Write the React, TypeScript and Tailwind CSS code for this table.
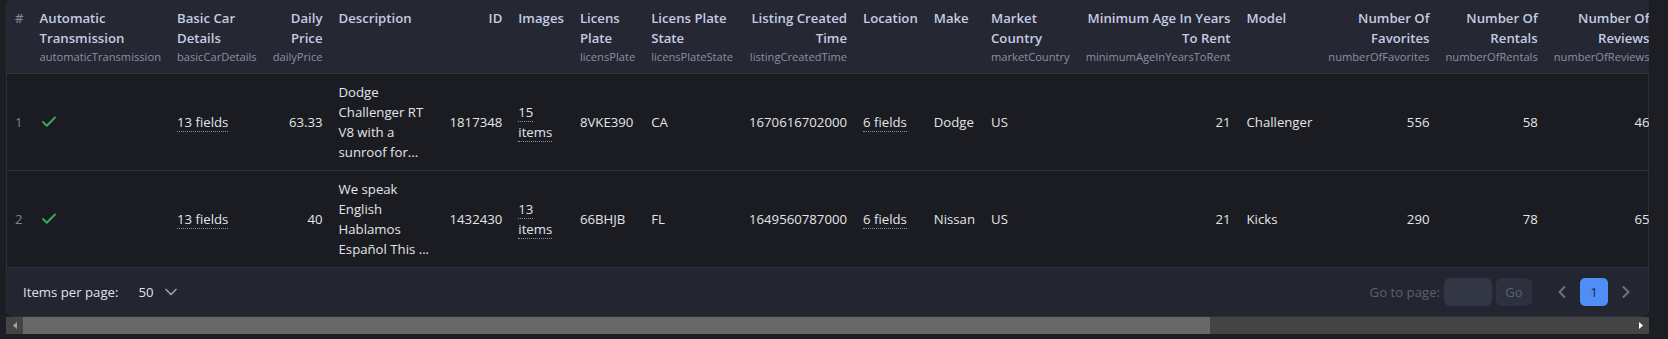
import type { ReactNode } from 'react'
import { Check, ChevronDown, ChevronLeft, ChevronRight } from 'lucide-react'

type Column = { title: string[]; sub?: string; right?: boolean }

const columns: Column[] = [
  { title: ['Automatic', 'Transmission'], sub: 'automaticTransmission' },
  { title: ['Basic Car', 'Details'], sub: 'basicCarDetails' },
  { title: ['Daily', 'Price'], sub: 'dailyPrice', right: true },
  { title: ['Description'] },
  { title: ['ID'], right: true },
  { title: ['Images'] },
  { title: ['Licens', 'Plate'], sub: 'licensPlate' },
  { title: ['Licens Plate', 'State'], sub: 'licensPlateState' },
  { title: ['Listing Created', 'Time'], sub: 'listingCreatedTime', right: true },
  { title: ['Location'] },
  { title: ['Make'] },
  { title: ['Market', 'Country'], sub: 'marketCountry' },
  { title: ['Minimum Age In Years', 'To Rent'], sub: 'minimumAgeInYearsToRent', right: true },
  { title: ['Model'] },
  { title: ['Number Of', 'Favorites'], sub: 'numberOfFavorites', right: true },
  { title: ['Number Of', 'Rentals'], sub: 'numberOfRentals', right: true },
  { title: ['Number Of', 'Reviews'], sub: 'numberOfReviews', right: true },
  { title: ['Owner'] },
  { title: ['Rating'], right: true },
  { title: ['Seats'], right: true },
  { title: ['Trim'] },
  { title: ['Year'], right: true },
]

function Dotted({ children }: { children: ReactNode }) {
  return <span className="border-b border-dotted border-[#8a8fa0]">{children}</span>
}

function Desc({ text }: { text: string }) {
  return <div className="w-[95px]">{text}</div>
}

const ok = <Check size={18} strokeWidth={2.5} className="text-[#3daa5c]" />

const rows: ReactNode[][] = [
  [
    ok,
    <Dotted>13 fields</Dotted>,
    '63.33',
    <Desc text="Dodge Challenger RT V8 with a sunroof for..." />,
    '1817348',
    <Dotted>15 items</Dotted>,
    '8VKE390',
    'CA',
    '1670616702000',
    <Dotted>6 fields</Dotted>,
    'Dodge',
    'US',
    '21',
    'Challenger',
    '556',
    '58',
    '46',
    <Dotted>4 fields</Dotted>,
    '4.9',
    '5',
    'R/T',
    '2019',
  ],
  [
    ok,
    <Dotted>13 fields</Dotted>,
    '40',
    <Desc text="We speak English Hablamos Español This ..." />,
    '1432430',
    <Dotted>13 items</Dotted>,
    '66BHJB',
    'FL',
    '1649560787000',
    <Dotted>6 fields</Dotted>,
    'Nissan',
    'US',
    '21',
    'Kicks',
    '290',
    '78',
    '65',
    <Dotted>4 fields</Dotted>,
    '5',
    '5',
    'SV',
    '2021',
  ],
]

export default function App() {
  return (
    <div className="min-h-screen bg-[#1d1e23] pl-[6px] font-['Open_Sans',sans-serif] text-[13.2px] leading-5">
      <div className="w-[1643px] overflow-hidden">
        <div className="-mt-[2px] rounded-lg border border-[#2c2e3a] bg-[#1b1c21]">
          <table className="w-full border-separate border-spacing-0">
            <thead>
              <tr>
                <th className="rounded-tl-[7px] border-b border-[#30323f] bg-[#252733] px-2 pb-2 pt-[9px] text-left align-top font-semibold text-[#7f8598]">
                  #
                </th>
                {columns.map((c, i) => (
                  <th
                    key={i}
                    className={`border-b border-[#30323f] bg-[#252733] px-2 pb-2 pt-[9px] align-top font-semibold text-[#c5cbe0] ${c.right ? 'text-right' : 'text-left'}`}
                  >
                    {c.title.map((t) => (
                      <div key={t} className="whitespace-nowrap">
                        {t}
                      </div>
                    ))}
                    {c.sub && (
                      <div className="mt-px whitespace-nowrap text-[11.15px] font-normal leading-4 text-[#8a90a6]">
                        {c.sub}
                      </div>
                    )}
                  </th>
                ))}
              </tr>
            </thead>
            <tbody>
              {rows.map((cells, r) => (
                <tr key={r}>
                  <td className="border-b border-[#2e303c] px-2 py-2 align-middle text-[#7f8494]">{r + 1}</td>
                  {cells.map((cell, i) => (
                    <td
                      key={i}
                      className={`border-b border-[#2e303c] px-2 py-2 align-middle text-[#e3e5ea] ${columns[i].right ? 'text-right' : 'text-left'}`}
                    >
                      {cell}
                    </td>
                  ))}
                </tr>
              ))}
            </tbody>
          </table>

          <div className="flex h-12 items-center justify-between rounded-b-[7px] bg-[#232530] pl-4 pr-2">
            <div className="flex items-center text-[#dfe3ee]">
              <span>Items per page:</span>
              <span className="ml-5">50</span>
              <ChevronDown size={20} strokeWidth={2} className="ml-[7px] text-[#9aa0b3]" />
            </div>
            <div className="flex items-center gap-4">
              <div className="flex items-center gap-1">
                <span className="text-[#5a6075]">Go to page:</span>
                <div className="h-7 w-12 rounded-md bg-[#333645]" />
                <div className="flex h-7 w-9 items-center justify-center rounded-md bg-[#2d303e] text-[#5b6176]">
                  Go
                </div>
              </div>
              <div className="flex items-center gap-1">
                <div className="flex h-7 w-7 items-center justify-center text-[#6b7083]">
                  <ChevronLeft size={20} strokeWidth={2.5} />
                </div>
                <div className="flex h-7 w-7 items-center justify-center rounded-[5px] bg-[#4f8ef7] text-[#1d2940]">
                  1
                </div>
                <div className="flex h-7 w-7 items-center justify-center text-[#6b7083]">
                  <ChevronRight size={20} strokeWidth={2.5} />
                </div>
              </div>
            </div>
          </div>
        </div>
      </div>

      <div className="flex h-[17px] w-[1643px] bg-[#444444]">
        <div className="flex w-[17px] items-center justify-center">
          <svg width="4" height="7" viewBox="0 0 4 7">
            <path d="M4 0 0 3.5 4 7z" fill="#a3a3a3" />
          </svg>
        </div>
        <div className="w-[1187px] bg-[#686868]" />
        <div className="flex-1" />
        <div className="flex w-[17px] items-center justify-center">
          <svg width="4" height="7" viewBox="0 0 4 7">
            <path d="M0 0 4 3.5 0 7z" fill="#ffffff" />
          </svg>
        </div>
      </div>
    </div>
  )
}
